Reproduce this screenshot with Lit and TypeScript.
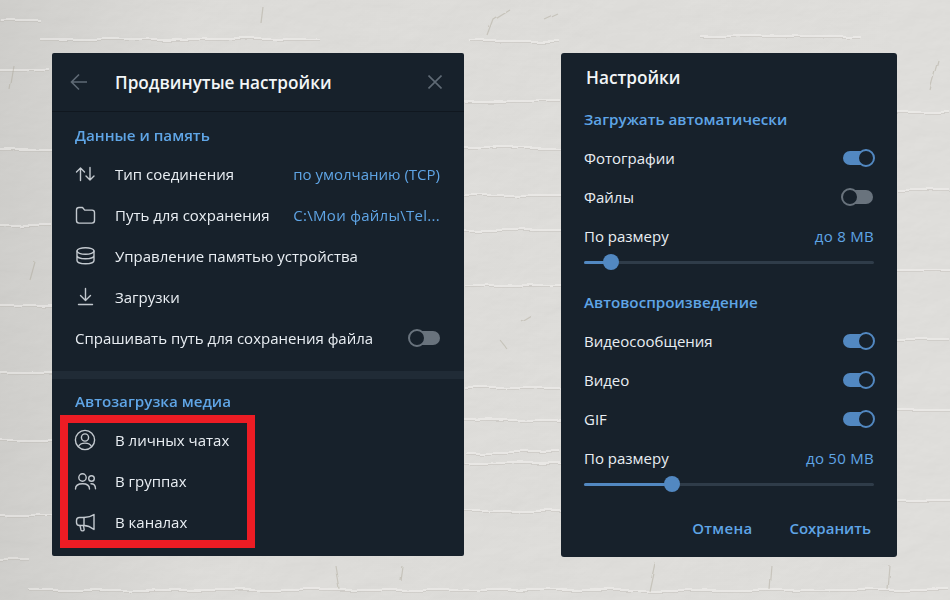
import { LitElement, html, css, svg } from "lit";
import { customElement } from "lit/decorators.js";

const ico = (body: unknown) => html`<svg class="ico" width="24" height="24" viewBox="0 0 24 24" fill="none" stroke="currentColor" stroke-width="1.4" stroke-linecap="round" stroke-linejoin="round">${body}</svg>`;

const icons = {
  updown: ico(svg`<path d="M7.500 18.500V6M3.500 10l4-4 4 4M17 5.500V18M13 14l4 4 4-4"/>`),
  folder: ico(svg`<path d="M3.500 7C3.500 5.500 4.500 4.500 6 4.500h3.500l2.200 2.600H19c1.500 0 2.500 1 2.500 2.500v8c0 1.500-1 2.500-2.500 2.500H6c-1.500 0-2.500-1-2.500-2.500z"/>`),
  db: ico(svg`<ellipse cx="12.500" cy="7" rx="8.500" ry="3.300"/><path d="M4 7v4.500c0 1.900 3.800 3.300 8.500 3.300s8.500-1.400 8.500-3.300V7M4 11.500v5c0 1.900 3.800 3.300 8.500 3.300s8.500-1.400 8.500-3.300v-5"/>`),
  download: ico(svg`<path d="M12.500 3.500v12M7.500 10.500l5 5 5-5M5.500 19.500h14"/>`),
  user: ico(svg`<circle cx="12" cy="12" r="9.600"/><circle cx="12" cy="9.500" r="3.600"/><path d="M5.500 18.500c1-2.500 3.500-3.400 6.500-3.400s5.500.9 6.500 3.400"/>`),
  group: ico(svg`<circle cx="9.500" cy="8.500" r="3.700"/><circle cx="18.500" cy="9.500" r="2.800"/><path d="M2.500 20c0-3.800 3-5.200 7-5.200s7 1.400 7 5.200M18 14.800c2.800 0 4.500 1.600 4.500 5"/>`),
  megaphone: ico(svg`<path d="M21 4.500v15c-3-2.300-6-3.900-10-4H6.500c-2 0-3-1.300-3-3V10.500c0-1.700 1-3 3-3H11c4-.1 7-.9 10-3z"/><path d="M7 15.500l1 4.500c.3 1.200 2.800 1.200 3.200-.2l-.7-4.300M11 7.500v8"/>`),
};

const row = (icon: unknown, label: string, value?: string, wide = false) => html`
  <div class="row">
    <span class="icon-slot">${icon}</span>
    <span class="label">${label}</span>
    ${value ? html`<span class="value ${wide ? "wide" : ""}">${value}</span>` : ""}
  </div>`;

const toggle = (label: string, on: boolean) => html`
  <div class="opt">
    <span class="label">${label}</span>
    <span class="switch ${on ? "on" : ""}"><i></i></span>
  </div>`;

const slider = (value: string, pct: number) => html`
  <div class="opt">
    <span class="label">По размеру</span><span class="value wide">${value}</span>
  </div>
  <div class="slider">
    <div class="fill" style="width:${pct}%"></div>
    <div class="knob" style="left:${pct}%"></div>
  </div>`;

// Whitewashed mortar ridges of the wall: [y, x1, x2]
const ridges: [number, number, number][] = [
  [39, 40, 320], [41, 470, 560], [20, 0, 40], [36, 700, 860],
  [70, 0, 50], [101, 464, 561], [112, 897, 950], [147, 464, 561], [150, 0, 52],
  [195, 464, 561], [190, 897, 950], [230, 464, 561], [225, 0, 52], [285, 464, 561],
  [270, 897, 950], [305, 0, 52], [340, 897, 950], [387, 464, 561], [372, 0, 52],
  [420, 464, 561], [410, 897, 950], [452, 464, 561], [440, 0, 52], [463, 464, 561],
  [500, 897, 950], [511, 464, 561], [515, 0, 52], [590, 30, 950], [560, 0, 30],
];

// Brownish chips and cracks in the paint
const cracks = [
  "M488 36 L494 20 L510 10", "M545 20 L558 14", "M262 24 L264 8",
  "M520 320 L530 314", "M500 340 L508 350", "M10 90 L14 66", "M35 262 L30 280",
  "M930 90 L938 60", "M340 590 L336 566", "M400 580 L402 566", "M648 590 L654 562",
  "M770 590 L772 566", "M888 590 L890 566",
];

@customElement("app-root")
export class AppRoot extends LitElement {
  static styles = css`
    :host {
      display: block;
      position: relative;
      width: 950px;
      height: 600px;
      overflow: hidden;
      background: #dfdedb;
      font-family: "Open Sans", sans-serif;
      font-size: 15px;
      color: #e9eef3;
    }
    .wall { position: absolute; inset: 0; }
    .page {
      position: relative;
      display: flex;
      align-items: flex-start;
      gap: 97px;
      padding: 53px 0 0 52px;
    }
    .panel {
      background: #17212b;
      border-radius: 2px;
      box-sizing: border-box;
      height: 503px;
    }
    .left { width: 412px; position: relative; }
    .right { width: 336px; height: 504px; padding: 0 23px; border-radius: 3px; }
    .head {
      height: 59px;
      display: flex;
      align-items: center;
      padding: 0 22px 0 18px;
      border-bottom: 1px solid #10171f;
      box-sizing: border-box;
    }
    .head .title { margin-left: 27px; flex: 1; font-size: 17.200px; font-weight: 600; color: #f2f5f7; }
    .head svg { color: #5f6a75; display: block; }
    h3 { margin: 0; font-size: 15.200px; font-weight: 600; color: #5fa5e6; line-height: 20px; }
    .left h3 { padding-left: 23px; }
    .row {
      display: flex;
      align-items: center;
      height: 41px;
      padding: 0 24px 0 21px;
    }
    .icon-slot { width: 24px; height: 24px; margin-right: 18px; color: #c3c9cf; flex: none; }
    .ico { display: block; }
    .label { flex: 1; white-space: nowrap; }
    .value { color: #5fa5e6; white-space: nowrap; }
    .value.wide { letter-spacing: 0.28px; }
    .row.plain { padding-left: 23px; }
    .row .switch { margin-right: 0; }
    .s1 { padding-top: 13px; margin-bottom: 8px; }
    .rows { display: flex; flex-direction: column; }
    .band { height: 8px; background: #202b36; margin-top: 13px; }
    .s2 { padding-top: 12px; margin-bottom: 8px; }
    .title2 { font-size: 17.200px; font-weight: 600; color: #f2f5f7; height: 48px; display: flex; align-items: center; margin-left: 2px; }
    .opt { display: flex; align-items: center; height: 39px; }
    .switch {
      position: relative;
      width: 30px;
      height: 14px;
      border-radius: 7px;
      background: #69737d;
      flex: none;
      margin-right: 1px;
    }
    .switch i {
      position: absolute;
      left: -2px;
      top: -2px;
      width: 14px;
      height: 14px;
      border-radius: 50%;
      background: #17212b;
      border: 2px solid #69737d;
    }
    .switch.on { background: #5288c1; }
    .switch.on i { left: auto; right: -2px; border-color: #5288c1; }
    .slider { position: relative; height: 3px; background: #2f3c49; border-radius: 2px; margin: 6px 0 0; }
    .fill { height: 100%; background: #5288c1; border-radius: 2px; }
    .knob {
      position: absolute;
      top: -7px;
      width: 16px;
      height: 16px;
      margin-left: -8px;
      border-radius: 50%;
      background: #5288c1;
    }
    .sec1 { margin-top: 8px; margin-bottom: 9px; }
    .sec2 { margin-top: 28px; margin-bottom: 9px; }
    .actions { display: flex; justify-content: flex-end; gap: 37px; margin-top: 32px; padding-right: 3px; font-weight: 600; color: #5fa5e6; }
    .cancel { letter-spacing: 0.3px; }
    .highlight {
      position: absolute;
      left: 8px;
      top: 362px;
      width: 195px;
      height: 133px;
      box-sizing: border-box;
      border: 8px solid #ed1c24;
    }
  `;

  render() {
    return html`
      <svg class="wall" width="950" height="600" viewBox="0 0 950 600">
        <defs>
          <filter id="plaster" x="0" y="0" width="100%" height="100%" color-interpolation-filters="sRGB">
            <feTurbulence type="fractalNoise" baseFrequency="0.02 0.035" numOctaves="4" seed="11" result="n"/>
            <feDiffuseLighting in="n" surfaceScale="1.300" diffuseConstant="1" lighting-color="#ffffff">
              <feDistantLight azimuth="235" elevation="65"/>
            </feDiffuseLighting>
          </filter>
          <filter id="rough" x="-5%" y="-5%" width="110%" height="110%">
            <feTurbulence type="fractalNoise" baseFrequency="0.03" numOctaves="3" seed="3" result="d"/>
            <feDisplacementMap in="SourceGraphic" in2="d" scale="7"/>
            <feGaussianBlur stdDeviation="0.600"/>
          </filter>
          <linearGradient id="shade" x1="0" x2="1" y1="0" y2="0">
            <stop offset="0" stop-color="#8f8f8c" stop-opacity=".2"/>
            <stop offset=".2" stop-color="#8f8f8c" stop-opacity=".03"/>
            <stop offset="1" stop-color="#8f8f8c" stop-opacity="0"/>
          </linearGradient>
        </defs>
        <rect width="950" height="600" fill="#e2e1de"/>
        <rect width="950" height="600" filter="url(#plaster)" style="mix-blend-mode:multiply" opacity=".16"/>
        <rect width="950" height="600" fill="url(#shade)"/>
        <g filter="url(#rough)" fill="none">
          <g stroke="#b3b1ab" stroke-width="1.100" opacity=".32" transform="translate(0 1.500)">
            ${ridges.map(([y, a, b]) => svg`<path d="M${a} ${y}H${b}"/>`)}
          </g>
          <g stroke="#f4f3f0" stroke-width="1.300" opacity=".65">
            ${ridges.map(([y, a, b]) => svg`<path d="M${a} ${y}H${b}"/>`)}
          </g>
          <g stroke="#a59f8e" stroke-width="1.200" opacity=".4">
            ${cracks.map((d) => svg`<path d="${d}"/>`)}
          </g>
        </g>
      </svg>
      <div class="page">
        <section class="panel left">
          <div class="head">
            <svg width="18" height="18" viewBox="0 0 18 18" fill="none" stroke="currentColor" stroke-width="1.600"><path d="M17 9H2M9 1.500 1.500 9 9 16.500"/></svg>
            <span class="title">Продвинутые настройки</span>
            <svg width="14" height="14" viewBox="0 0 14 14" fill="none" stroke="currentColor" stroke-width="1.600"><path d="M.5.500l13 13M13.500.500l-13 13"/></svg>
          </div>
          <h3 class="s1">Данные и память</h3>
          <div class="rows">
            ${row(icons.updown, "Тип соединения", "по умолчанию (TCP)")}
            ${row(icons.folder, "Путь для сохранения", "C:\\Мои файлы\\Tel...", true)}
            ${row(icons.db, "Управление памятью устройства")}
            ${row(icons.download, "Загрузки")}
            <div class="row plain"><span class="label">Спрашивать путь для сохранения файла</span><span class="switch"><i></i></span></div>
          </div>
          <div class="band"></div>
          <h3 class="s2">Автозагрузка медиа</h3>
          <div class="rows">
            ${row(icons.user, "В личных чатах")}
            ${row(icons.group, "В группах")}
            ${row(icons.megaphone, "В каналах")}
          </div>
          <div class="highlight"></div>
        </section>
        <section class="panel right">
          <div class="title2">Настройки</div>
          <h3 class="sec1">Загружать автоматически</h3>
          ${toggle("Фотографии", true)}
          ${toggle("Файлы", false)}
          ${slider("до 8 MB", 9.35)}
          <h3 class="sec2">Автовоспроизведение</h3>
          ${toggle("Видеосообщения", true)}
          ${toggle("Видео", true)}
          ${toggle("GIF", true)}
          ${slider("до 50 MB", 30.35)}
          <div class="actions"><span class="cancel">Отмена</span><span>Сохранить</span></div>
        </section>
      </div>
    `;
  }
}
